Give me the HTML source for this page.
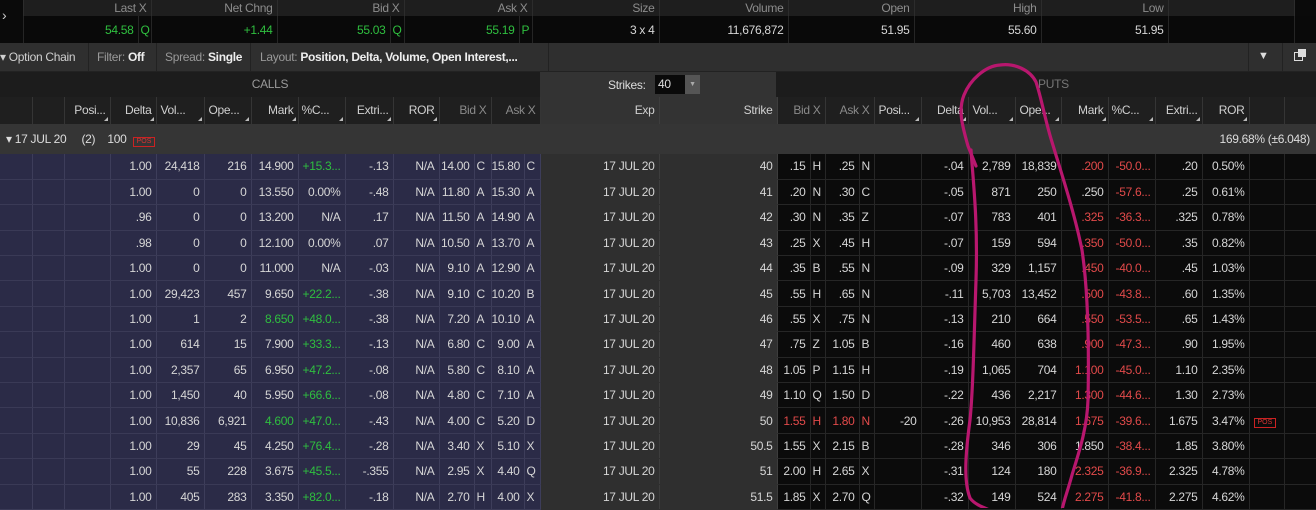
<!DOCTYPE html>
<html><head><meta charset="utf-8"><style>
*{box-sizing:border-box;margin:0;padding:0}
body{width:1316px;height:508px;overflow:hidden;background:#0c0c0c;font-family:"Liberation Sans",sans-serif;font-size:12px;color:#d6d6d6;position:relative;letter-spacing:-0.3px}
.abs{position:absolute}
table{border-collapse:collapse;table-layout:fixed;position:absolute;left:0}
td{white-space:nowrap;overflow:hidden;text-align:right;padding-right:4px}
.g{color:#2fbf3f}.r{color:#e24a4a}.m{color:#8a8a8a}
#top1 td{height:16px;background:#1e1e1e;color:#8c8c8c;border-right:1px solid #2c2c2c;line-height:16px}
#top2 td{height:27px;background:#090909;border-right:1px solid #252525;color:#d6d6d6}
#top2 td.g{color:#2fbf3f}
#hdr td{height:27px;background:#1f1f1f;border-right:1px solid #353535;border-bottom:1px solid #111;color:#d0d0d0;position:relative}
#hdr td.m{color:#8a8a8a}
#hdr td.t::after{content:"";position:absolute;right:2px;bottom:3px;border-left:4px solid transparent;border-bottom:4px solid #bbb}
#hdr td.mid{background:#333;border-right:1px solid #3d3d3d}
#data td{height:25.4px;border-right:1px solid #3d3d5a;border-bottom:1px solid #3a3a56;background:#2b2b47}
#data td.l{text-align:left;padding-left:2px;padding-right:0}
#data td.mid{background:#2f2f2f;border-right:1px solid #3d3d3d;border-bottom:1px solid #2f2f2f}
#data td.p{background:#0b0b0b;border-right:1px solid #262626;border-bottom:1px solid #262626}
.pos{display:inline-block;border:1px solid #c22;color:#d33;font-size:7px;padding:0 3px;line-height:8px;letter-spacing:0}
</style></head><body>

<table id="top1" style="top:0;width:1316px">
<colgroup><col style="width:23px"><col style="width:128px"><col style="width:126px"><col style="width:127px"><col style="width:128px"><col style="width:127px"><col style="width:129px"><col style="width:126px"><col style="width:127px"><col style="width:127px"><col style="width:126px"><col style="width:22px"></colgroup>
<tr><td style="background:#0a0a0a"></td><td>Last X</td><td>Net Chng</td><td>Bid X</td><td>Ask X</td><td>Size</td><td>Volume</td><td>Open</td><td>High</td><td>Low</td><td></td><td style="background:#0a0a0a;border:0"></td></tr>
</table>
<table id="top2" style="top:16px;width:1316px">
<colgroup><col style="width:23px"><col style="width:115px"><col style="width:13px"><col style="width:126px"><col style="width:113px"><col style="width:14px"><col style="width:115px"><col style="width:13px"><col style="width:127px"><col style="width:129px"><col style="width:126px"><col style="width:127px"><col style="width:127px"><col style="width:126px"><col style="width:22px"></colgroup>
<tr><td></td><td class="g">54.58</td><td class="g" style="text-align:left;padding-left:2px">Q</td><td class="g">+1.44</td><td class="g">55.03</td><td class="g" style="text-align:left;padding-left:2px">Q</td><td class="g">55.19</td><td class="g" style="text-align:left;padding-left:2px">P</td><td>3 x 4</td><td>11,676,872</td><td>51.95</td><td>55.60</td><td>51.95</td><td></td><td style="border:0"></td></tr>
</table>
<div class="abs" style="left:0;top:0;width:23px;height:43px;background:#0a0a0a"></div>
<div class="abs" style="left:2px;top:7px;color:#ccc;font-size:14px">›</div>

<!-- toolbar -->
<div class="abs" style="left:0;top:43px;width:1316px;height:29px;background:#2f2f2f;border-bottom:1px solid #222"></div>
<div class="abs" style="left:0;top:50px;color:#d0d0d0;font-size:12px">▾ Option Chain</div>
<div class="abs" style="left:88px;top:43px;width:1px;height:29px;background:#222"></div>
<div class="abs" style="left:97px;top:50px;color:#999">Filter: <b style="color:#eee">Off</b></div>
<div class="abs" style="left:156px;top:43px;width:1px;height:29px;background:#222"></div>
<div class="abs" style="left:165px;top:50px;color:#999">Spread: <b style="color:#eee">Single</b></div>
<div class="abs" style="left:250px;top:43px;width:1px;height:29px;background:#222"></div>
<div class="abs" style="left:260px;top:50px;color:#999">Layout: <b style="color:#eee">Position, Delta, Volume, Open Interest,...</b></div>
<div class="abs" style="left:548px;top:43px;width:1px;height:29px;background:#222"></div>
<div class="abs" style="left:1248px;top:43px;width:1px;height:29px;background:#222"></div>
<div class="abs" style="left:1258px;top:50px;color:#ddd;font-size:11px">▼</div>
<div class="abs" style="left:1282px;top:43px;width:1px;height:29px;background:#222"></div>
<div class="abs" style="left:1294px;top:52px;width:9px;height:9px;border:1px solid #ddd"></div>
<div class="abs" style="left:1298px;top:49px;width:8px;height:8px;background:#ddd"></div>

<!-- title row -->
<div class="abs" style="left:0;top:72px;width:540px;height:25px;background:#1c1c1c;color:#9a9a9a;text-align:center;line-height:25px">CALLS</div>
<div class="abs" style="left:540px;top:72px;width:236px;height:52px;background:#333"></div>
<div class="abs" style="left:608px;top:78px;color:#ddd">Strikes:</div>
<div class="abs" style="left:655px;top:75px;width:30px;height:19px;background:#0a0a0a;color:#ddd;padding-left:3px;line-height:19px">40</div>
<div class="abs" style="left:685px;top:75px;width:15px;height:19px;background:#555;color:#aaa;font-size:7px;text-align:center;line-height:19px">▼</div>
<div class="abs" style="left:776px;top:72px;width:540px;height:25px;background:#1c1c1c;color:#777;line-height:25px;padding-left:262px">PUTS</div>

<table id="hdr" style="top:97px;width:1316px">
<colgroup><col style="width:32px"><col style="width:32px"><col style="width:46px"><col style="width:46px"><col style="width:48px"><col style="width:47px"><col style="width:47px"><col style="width:47px"><col style="width:48px"><col style="width:46px"><col style="width:52px"><col style="width:49px"><col style="width:119px"><col style="width:118px"><col style="width:48px"><col style="width:49px"><col style="width:47px"><col style="width:47px"><col style="width:47px"><col style="width:46px"><col style="width:47px"><col style="width:47px"><col style="width:47px"><col style="width:47px"><col style="width:35px"><col style="width:32px"></colgroup>
<tr><td></td><td></td><td class="t">Posi...</td><td class="t">Delta</td><td class="t" style="text-align:left;padding-left:4px">Vol...</td><td class="t" style="text-align:left;padding-left:4px">Ope...</td><td class="t">Mark</td><td class="t" style="text-align:left;padding-left:3px">%C...</td><td class="t">Extri...</td><td class="t">ROR</td><td class="m">Bid X</td><td class="m">Ask X</td><td class="mid">Exp</td><td class="mid">Strike</td><td class="m">Bid X</td><td class="m">Ask X</td><td class="t" style="text-align:left;padding-left:4px">Posi...</td><td class="t">Delta</td><td class="t" style="text-align:left;padding-left:4px">Vol...</td><td class="t" style="text-align:left;padding-left:4px">Ope...</td><td class="t">Mark</td><td class="t" style="text-align:left;padding-left:3px">%C...</td><td class="t">Extri...</td><td class="t">ROR</td><td></td><td></td></tr>
</table>

<!-- group row -->
<div class="abs" style="left:0;top:124px;width:1316px;height:30px;background:#353535"></div>
<div class="abs" style="left:6px;top:132px;color:#ddd">▾ 17 JUL 20 &nbsp;&nbsp;&nbsp; (2) &nbsp;&nbsp; 100 &nbsp;<span class="pos">POS</span></div>
<div class="abs" style="right:6px;top:132px;color:#ddd">169.68% (±6.048)</div>

<table id="data" style="top:154px;width:1316px">
<colgroup><col style="width:32px"><col style="width:32px"><col style="width:46px"><col style="width:46px"><col style="width:48px"><col style="width:47px"><col style="width:47px"><col style="width:47px"><col style="width:48px"><col style="width:46px"><col style="width:35px"><col style="width:17px"><col style="width:33px"><col style="width:16px"><col style="width:119px"><col style="width:118px"><col style="width:33px"><col style="width:15px"><col style="width:34px"><col style="width:15px"><col style="width:47px"><col style="width:47px"><col style="width:47px"><col style="width:46px"><col style="width:47px"><col style="width:47px"><col style="width:47px"><col style="width:47px"><col style="width:35px"><col style="width:32px"></colgroup>
<tr><td></td><td></td><td></td><td>1.00</td><td>24,418</td><td>216</td><td>14.900</td><td class="g">+15.3...</td><td>-.13</td><td>N/A</td><td>14.00</td><td class="l">C</td><td>15.80</td><td class="l">C</td><td class="mid">17 JUL 20</td><td class="mid">40</td><td class="p">.15</td><td class="p l">H</td><td class="p">.25</td><td class="p l">N</td><td class="p"></td><td class="p">-.04</td><td class="p">2,789</td><td class="p">18,839</td><td class="p r">.200</td><td class="p r">-50.0...</td><td class="p">.20</td><td class="p">0.50%</td><td class="p"></td><td class="p"></td></tr>
<tr><td></td><td></td><td></td><td>1.00</td><td>0</td><td>0</td><td>13.550</td><td>0.00%</td><td>-.48</td><td>N/A</td><td>11.80</td><td class="l">A</td><td>15.30</td><td class="l">A</td><td class="mid">17 JUL 20</td><td class="mid">41</td><td class="p">.20</td><td class="p l">N</td><td class="p">.30</td><td class="p l">C</td><td class="p"></td><td class="p">-.05</td><td class="p">871</td><td class="p">250</td><td class="p">.250</td><td class="p r">-57.6...</td><td class="p">.25</td><td class="p">0.61%</td><td class="p"></td><td class="p"></td></tr>
<tr><td></td><td></td><td></td><td>.96</td><td>0</td><td>0</td><td>13.200</td><td>N/A</td><td>.17</td><td>N/A</td><td>11.50</td><td class="l">A</td><td>14.90</td><td class="l">A</td><td class="mid">17 JUL 20</td><td class="mid">42</td><td class="p">.30</td><td class="p l">N</td><td class="p">.35</td><td class="p l">Z</td><td class="p"></td><td class="p">-.07</td><td class="p">783</td><td class="p">401</td><td class="p r">.325</td><td class="p r">-36.3...</td><td class="p">.325</td><td class="p">0.78%</td><td class="p"></td><td class="p"></td></tr>
<tr><td></td><td></td><td></td><td>.98</td><td>0</td><td>0</td><td>12.100</td><td>0.00%</td><td>.07</td><td>N/A</td><td>10.50</td><td class="l">A</td><td>13.70</td><td class="l">A</td><td class="mid">17 JUL 20</td><td class="mid">43</td><td class="p">.25</td><td class="p l">X</td><td class="p">.45</td><td class="p l">H</td><td class="p"></td><td class="p">-.07</td><td class="p">159</td><td class="p">594</td><td class="p r">.350</td><td class="p r">-50.0...</td><td class="p">.35</td><td class="p">0.82%</td><td class="p"></td><td class="p"></td></tr>
<tr><td></td><td></td><td></td><td>1.00</td><td>0</td><td>0</td><td>11.000</td><td>N/A</td><td>-.03</td><td>N/A</td><td>9.10</td><td class="l">A</td><td>12.90</td><td class="l">A</td><td class="mid">17 JUL 20</td><td class="mid">44</td><td class="p">.35</td><td class="p l">B</td><td class="p">.55</td><td class="p l">N</td><td class="p"></td><td class="p">-.09</td><td class="p">329</td><td class="p">1,157</td><td class="p r">.450</td><td class="p r">-40.0...</td><td class="p">.45</td><td class="p">1.03%</td><td class="p"></td><td class="p"></td></tr>
<tr><td></td><td></td><td></td><td>1.00</td><td>29,423</td><td>457</td><td>9.650</td><td class="g">+22.2...</td><td>-.38</td><td>N/A</td><td>9.10</td><td class="l">C</td><td>10.20</td><td class="l">B</td><td class="mid">17 JUL 20</td><td class="mid">45</td><td class="p">.55</td><td class="p l">H</td><td class="p">.65</td><td class="p l">N</td><td class="p"></td><td class="p">-.11</td><td class="p">5,703</td><td class="p">13,452</td><td class="p r">.500</td><td class="p r">-43.8...</td><td class="p">.60</td><td class="p">1.35%</td><td class="p"></td><td class="p"></td></tr>
<tr><td></td><td></td><td></td><td>1.00</td><td>1</td><td>2</td><td class="g">8.650</td><td class="g">+48.0...</td><td>-.38</td><td>N/A</td><td>7.20</td><td class="l">A</td><td>10.10</td><td class="l">A</td><td class="mid">17 JUL 20</td><td class="mid">46</td><td class="p">.55</td><td class="p l">X</td><td class="p">.75</td><td class="p l">N</td><td class="p"></td><td class="p">-.13</td><td class="p">210</td><td class="p">664</td><td class="p r">.550</td><td class="p r">-53.5...</td><td class="p">.65</td><td class="p">1.43%</td><td class="p"></td><td class="p"></td></tr>
<tr><td></td><td></td><td></td><td>1.00</td><td>614</td><td>15</td><td>7.900</td><td class="g">+33.3...</td><td>-.13</td><td>N/A</td><td>6.80</td><td class="l">C</td><td>9.00</td><td class="l">A</td><td class="mid">17 JUL 20</td><td class="mid">47</td><td class="p">.75</td><td class="p l">Z</td><td class="p">1.05</td><td class="p l">B</td><td class="p"></td><td class="p">-.16</td><td class="p">460</td><td class="p">638</td><td class="p r">.900</td><td class="p r">-47.3...</td><td class="p">.90</td><td class="p">1.95%</td><td class="p"></td><td class="p"></td></tr>
<tr><td></td><td></td><td></td><td>1.00</td><td>2,357</td><td>65</td><td>6.950</td><td class="g">+47.2...</td><td>-.08</td><td>N/A</td><td>5.80</td><td class="l">C</td><td>8.10</td><td class="l">A</td><td class="mid">17 JUL 20</td><td class="mid">48</td><td class="p">1.05</td><td class="p l">P</td><td class="p">1.15</td><td class="p l">H</td><td class="p"></td><td class="p">-.19</td><td class="p">1,065</td><td class="p">704</td><td class="p r">1.100</td><td class="p r">-45.0...</td><td class="p">1.10</td><td class="p">2.35%</td><td class="p"></td><td class="p"></td></tr>
<tr><td></td><td></td><td></td><td>1.00</td><td>1,450</td><td>40</td><td>5.950</td><td class="g">+66.6...</td><td>-.08</td><td>N/A</td><td>4.80</td><td class="l">C</td><td>7.10</td><td class="l">A</td><td class="mid">17 JUL 20</td><td class="mid">49</td><td class="p">1.10</td><td class="p l">Q</td><td class="p">1.50</td><td class="p l">D</td><td class="p"></td><td class="p">-.22</td><td class="p">436</td><td class="p">2,217</td><td class="p r">1.300</td><td class="p r">-44.6...</td><td class="p">1.30</td><td class="p">2.73%</td><td class="p"></td><td class="p"></td></tr>
<tr><td></td><td></td><td></td><td>1.00</td><td>10,836</td><td>6,921</td><td class="g">4.600</td><td class="g">+47.0...</td><td>-.43</td><td>N/A</td><td>4.00</td><td class="l">C</td><td>5.20</td><td class="l">D</td><td class="mid">17 JUL 20</td><td class="mid">50</td><td class="p r">1.55</td><td class="p l r">H</td><td class="p r">1.80</td><td class="p l r">N</td><td class="p">-20</td><td class="p">-.26</td><td class="p">10,953</td><td class="p">28,814</td><td class="p r">1.675</td><td class="p r">-39.6...</td><td class="p">1.675</td><td class="p">3.47%</td><td class="p" style="text-align:left;padding-left:4px"><span class="pos">POS</span></td><td class="p"></td></tr>
<tr><td></td><td></td><td></td><td>1.00</td><td>29</td><td>45</td><td>4.250</td><td class="g">+76.4...</td><td>-.28</td><td>N/A</td><td>3.40</td><td class="l">X</td><td>5.10</td><td class="l">X</td><td class="mid">17 JUL 20</td><td class="mid">50.5</td><td class="p">1.55</td><td class="p l">X</td><td class="p">2.15</td><td class="p l">B</td><td class="p"></td><td class="p">-.28</td><td class="p">346</td><td class="p">306</td><td class="p">1.850</td><td class="p r">-38.4...</td><td class="p">1.85</td><td class="p">3.80%</td><td class="p"></td><td class="p"></td></tr>
<tr><td></td><td></td><td></td><td>1.00</td><td>55</td><td>228</td><td>3.675</td><td class="g">+45.5...</td><td>-.355</td><td>N/A</td><td>2.95</td><td class="l">X</td><td>4.40</td><td class="l">Q</td><td class="mid">17 JUL 20</td><td class="mid">51</td><td class="p">2.00</td><td class="p l">H</td><td class="p">2.65</td><td class="p l">X</td><td class="p"></td><td class="p">-.31</td><td class="p">124</td><td class="p">180</td><td class="p r">2.325</td><td class="p r">-36.9...</td><td class="p">2.325</td><td class="p">4.78%</td><td class="p"></td><td class="p"></td></tr>
<tr><td></td><td></td><td></td><td>1.00</td><td>405</td><td>283</td><td>3.350</td><td class="g">+82.0...</td><td>-.18</td><td>N/A</td><td>2.70</td><td class="l">H</td><td>4.00</td><td class="l">X</td><td class="mid">17 JUL 20</td><td class="mid">51.5</td><td class="p">1.85</td><td class="p l">X</td><td class="p">2.70</td><td class="p l">Q</td><td class="p"></td><td class="p">-.32</td><td class="p">149</td><td class="p">524</td><td class="p r">2.275</td><td class="p r">-41.8...</td><td class="p">2.275</td><td class="p">4.62%</td><td class="p"></td><td class="p"></td></tr>
</table>

<svg class="abs" style="left:0;top:0" width="1316" height="508" viewBox="0 0 1316 508">
<g fill="none" stroke="#b8176e" stroke-width="3.2" stroke-linecap="round" stroke-linejoin="round">
<path d="M976,166 L968,146 C962,125 958,110 964,95 C970,80 985,66 1000,65 C1015,63 1030,70 1036,82 C1042,100 1045,120 1052,142 C1062,175 1075,215 1082,250 C1088,290 1089,350 1088,400 C1087,430 1078,455 1072,475 C1068,490 1064,500 1062,510"/>
<path d="M971,150 C973,180 978,220 976,280 C974,340 973,390 970,420 C966,450 963,480 970,498 C975,505 985,508 992,511"/>
</g></svg>
</body></html>
